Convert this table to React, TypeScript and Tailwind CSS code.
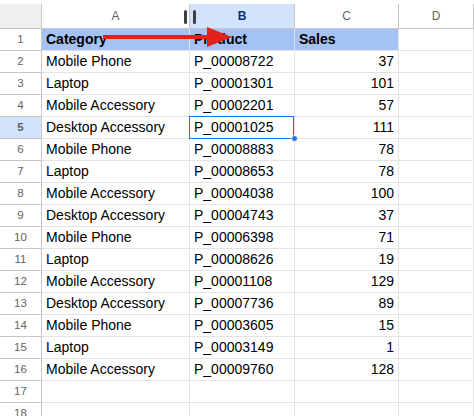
const rows: [string, string, string][] = [
  ['Mobile Phone', 'P_00008722', '37'],
  ['Laptop', 'P_00001301', '101'],
  ['Mobile Accessory', 'P_00002201', '57'],
  ['Desktop Accessory', 'P_00001025', '111'],
  ['Mobile Phone', 'P_00008883', '78'],
  ['Laptop', 'P_00008653', '78'],
  ['Mobile Accessory', 'P_00004038', '100'],
  ['Desktop Accessory', 'P_00004743', '37'],
  ['Mobile Phone', 'P_00006398', '71'],
  ['Laptop', 'P_00008626', '19'],
  ['Mobile Accessory', 'P_00001108', '129'],
  ['Desktop Accessory', 'P_00007736', '89'],
  ['Mobile Phone', 'P_00003605', '15'],
  ['Laptop', 'P_00003149', '1'],
  ['Mobile Accessory', 'P_00009760', '128'],
]

const cols = 'grid grid-cols-[42px_148px_105px_104px_1fr]'
const cell = 'h-[22px] border-r border-b border-[#e2e3e3] flex items-center px-[4px] whitespace-nowrap'
const num = 'h-[22px] border-r border-b border-[#c7c7c7] flex items-center justify-center text-[11.5px] text-[#5f6368]'

export default function App() {
  return (
    <div className="relative w-[474px] h-[416px] overflow-hidden bg-white pt-[4px] text-[14px] text-black" style={{ fontFamily: '"Liberation Sans", Arial, sans-serif' }}>
      {/* column headers */}
      <div className={cols}>
        <div className="h-[25px] bg-[#f0f0f0] border-r border-b border-[#c7c7c7]" />
        {['A', 'B', 'C', 'D'].map((c) => (
          <div
            key={c}
            className={
              'h-[25px] border-r border-b border-[#c7c7c7] flex items-center justify-center text-[12px] ' +
              (c === 'B' ? 'bg-[#d3e3fd] font-bold text-[#0b2f6b]' : 'bg-white text-[#5f6368]')
            }
          >
            {c}
          </div>
        ))}
      </div>

      {/* header row */}
      <div className={cols}>
        <div className={num}>1</div>
        <div className={cell + ' bg-[#a4c2f4] font-bold'}>Category</div>
        <div className={cell + ' bg-[#a4c2f4] font-bold'}>Product</div>
        <div className={cell + ' bg-[#a4c2f4] font-bold'}>Sales</div>
        <div className={cell} />
      </div>

      {rows.map((r, i) => {
        const n = i + 2
        const sel = n === 5
        return (
          <div key={n} className={cols}>
            <div className={num + (sel ? ' bg-[#d3e3fd] font-bold text-[#0b2f6b]' : '')}>{n}</div>
            <div className={cell}>{r[0]}</div>
            <div className={cell + ' relative'}>
              {r[1]}
              {sel && (
                <>
                  <div className="absolute -left-px -top-px w-[105px] h-[23px] border border-[#1a73e8]" />
                  <div className="absolute -right-[4px] -bottom-[4px] w-[7px] h-[7px] rounded-full bg-[#1a73e8] border border-white z-10" />
                </>
              )}
            </div>
            <div className={cell + ' justify-end'}>{r[2]}</div>
            <div className={cell} />
          </div>
        )
      })}

      {[17, 18].map((n) => (
        <div key={n} className={cols}>
          <div className={num}>{n}</div>
          <div className={cell} />
          <div className={cell} />
          <div className={cell} />
          <div className={cell} />
        </div>
      ))}

      {/* column resize grip */}
      <div className="absolute left-[184px] top-[10px] w-[3px] h-[14px] rounded-full bg-[#3c4043]" />
      <div className="absolute left-[193px] top-[10px] w-[3px] h-[14px] rounded-full bg-[#3c4043]" />

      {/* red arrow */}
      <svg className="absolute left-0 top-0" width="474" height="60">
        <rect x="103" y="35" width="108" height="4" fill="#e3211c" />
        <polygon points="207,27 232,37 207,47" fill="#e3211c" />
      </svg>
    </div>
  )
}
